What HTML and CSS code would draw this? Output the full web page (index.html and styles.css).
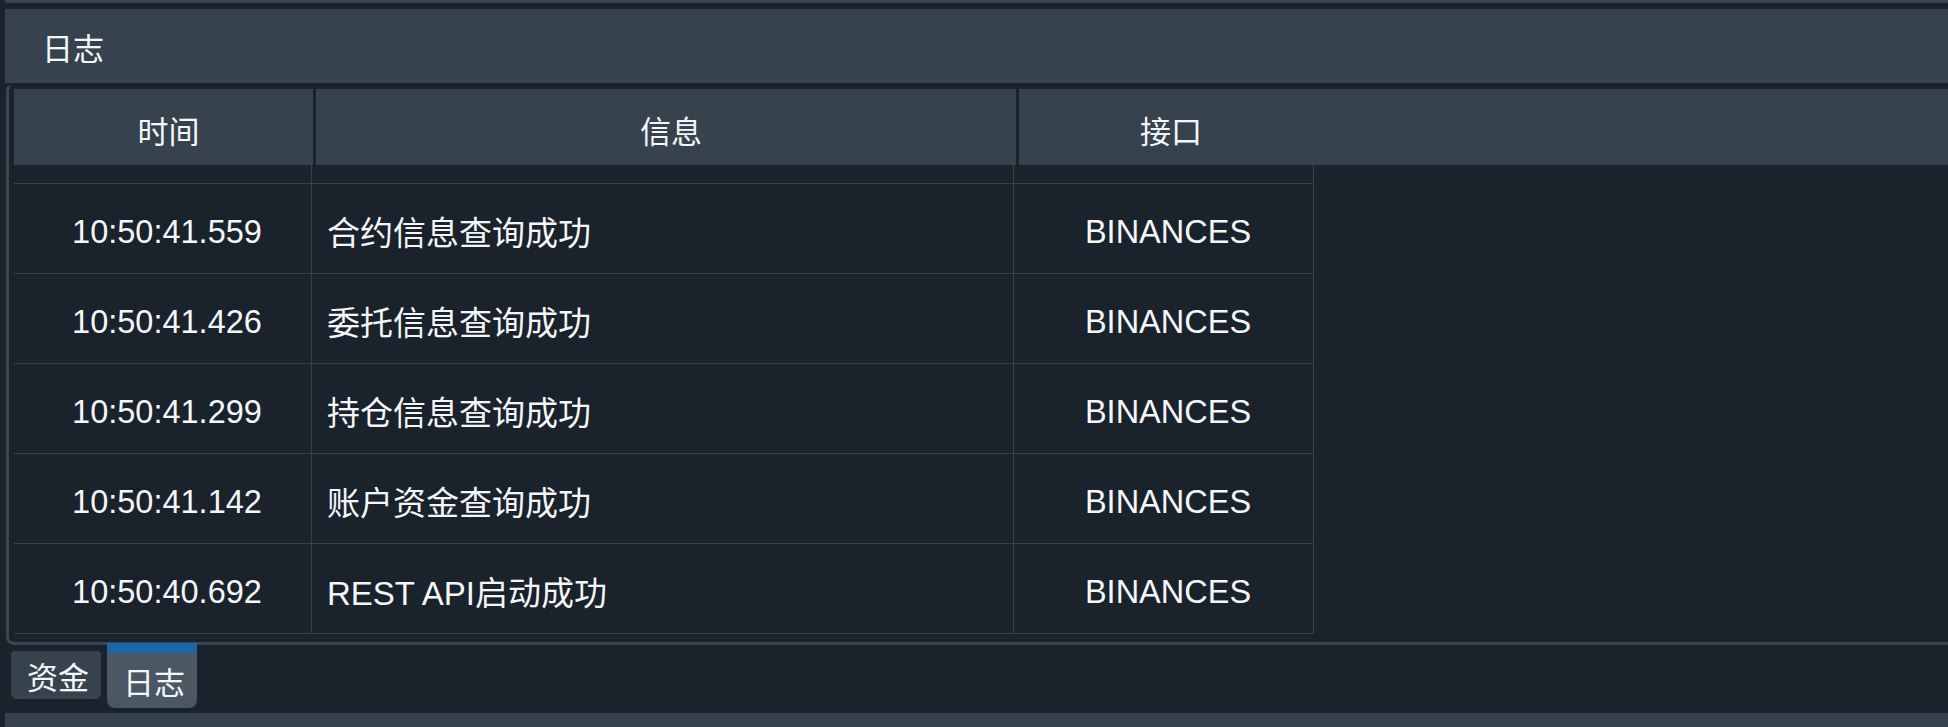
FILE: index.html
```html
<!DOCTYPE html>
<html lang="zh-CN">
<head>
  <meta charset="UTF-8">
  <title>日志</title>
  <link rel="stylesheet" href="styles.css">
</head>
<body>
  <div class="top-strip"></div>

  <!-- 日志面板 -->
  <div class="panel-title">日志</div>

  <div class="log-box">
    <div class="log-head">
      <div class="head-cell">时间</div>
      <div class="head-cell">信息</div>
      <div class="head-cell last"><span class="head-label">接口</span></div>
    </div>

    <div class="log-body">
      <div class="log-rows">
        <!-- 滚动后只露出底部的一行 -->
        <div class="log-row">
          <div class="cell time"></div>
          <div class="cell msg"></div>
          <div class="cell gw"></div>
        </div>
        <div class="log-row">
          <div class="cell time">10:50:41.559</div>
          <div class="cell msg">合约信息查询成功</div>
          <div class="cell gw">BINANCES</div>
        </div>
        <div class="log-row">
          <div class="cell time">10:50:41.426</div>
          <div class="cell msg">委托信息查询成功</div>
          <div class="cell gw">BINANCES</div>
        </div>
        <div class="log-row">
          <div class="cell time">10:50:41.299</div>
          <div class="cell msg">持仓信息查询成功</div>
          <div class="cell gw">BINANCES</div>
        </div>
        <div class="log-row">
          <div class="cell time">10:50:41.142</div>
          <div class="cell msg">账户资金查询成功</div>
          <div class="cell gw">BINANCES</div>
        </div>
        <div class="log-row">
          <div class="cell time">10:50:40.692</div>
          <div class="cell msg">REST API启动成功</div>
          <div class="cell gw">BINANCES</div>
        </div>
      </div>
    </div>
  </div>

  <!-- 底部标签 -->
  <div class="tabs">
    <div class="tab">资金</div>
    <div class="tab active">日志</div>
  </div>

  <div class="bottom-strip"></div>
</body>
</html>
```

FILE: styles.css
```css
html, body {
  margin: 0;
  height: 100%;
}
body {
  padding-left: 5px;
  background-color: #1a222b;
  color: #f4f6f8;
  font-family: "Liberation Sans", "Noto Sans CJK SC", sans-serif;
  overflow: hidden;
}
.top-strip {
  height: 3px;
  margin-bottom: 6px;
  background-color: #36434e;
}
.panel-title {
  height: 74px;
  padding-left: 37px;
  display: flex;
  align-items: center;
  background-color: #36434e;
  font-size: 31px;
}
.log-box {
  width: 2000px;
  height: 553px;
  margin-left: 1px;
  padding: 3px 0 0 5px;
  border: 3px solid #3a4651;
  border-top-color: #1a222b;
  border-radius: 8px;
}
.log-head {
  height: 76px;
  display: grid;
  grid-template-columns: 299px 700px 1fr;
  column-gap: 3px;
}
.head-cell {
  box-sizing: border-box;
  padding: 4px 0 0 10px;
  display: flex;
  align-items: center;
  justify-content: center;
  background-color: #36434e;
  font-size: 31px;
}
.head-cell.last {
  padding-left: 0;
  justify-content: flex-start;
}
.head-label {
  width: 304px;
  text-align: center;
}
.log-body {
  height: 477px;
  overflow: hidden;
}
.log-rows {
  margin-top: -71px;
}
.log-row {
  display: grid;
  grid-template-columns: 298px 702px 300px;
}
.cell {
  box-sizing: border-box;
  height: 90px;
  padding-top: 7px;
  display: flex;
  align-items: center;
  border-right: 1px solid #36414b;
  border-bottom: 1px solid #36414b;
  font-size: 32.5px;
}
.time, .gw {
  padding-left: 9px;
  justify-content: center;
}
.msg {
  padding-left: 15px;
  padding-top: 5px;
  font-size: 33px;
}
.tabs {
  height: 68px;
  padding-left: 6px;
  display: flex;
  align-items: flex-start;
  gap: 6px;
}
.tab {
  box-sizing: border-box;
  width: 90px;
  height: 48px;
  margin-top: 6px;
  padding-left: 4px;
  display: flex;
  align-items: center;
  justify-content: center;
  background-color: #36434e;
  border-radius: 4px 4px 6px 6px;
  font-size: 31px;
}
.tab.active {
  height: 65px;
  margin-top: -2px;
  padding-top: 0;
  border-top: 10px solid #1a68ab;
  border-radius: 2px 2px 8px 8px;
  background-color: #4a5863;
}
.bottom-strip {
  height: 14px;
  background-color: #36434e;
}
```
